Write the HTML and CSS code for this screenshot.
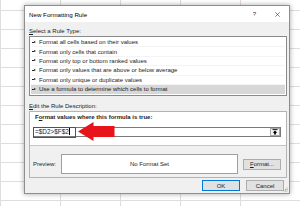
FILE: index.html
```html
<!DOCTYPE html>
<html lang="en">
<head>
    <meta charset="UTF-8">
    <title>New Formatting Rule</title>
    <link rel="stylesheet" href="styles.css">
</head>
<body>
    <div class="dialog">
        <div class="titlebar">
            <span class="title">New Formatting Rule</span>
            <span class="help">?</span>
            <svg class="close" width="5" height="5" viewBox="0 0 5 5">
                <path d="M0.3 0.3 L4.7 4.7 M4.7 0.3 L0.3 4.7" stroke="#333" stroke-width="0.6" fill="none"/>
            </svg>
        </div>

        <div class="content">
            <div class="label"><u>S</u>elect a Rule Type:</div>
            <ul class="rules">
                <li><i class="bullet"></i>Format all cells based on their values</li>
                <li><i class="bullet"></i>Format only cells that contain</li>
                <li><i class="bullet"></i>Format only top or bottom ranked values</li>
                <li><i class="bullet"></i>Format only values that are above or below average</li>
                <li><i class="bullet"></i>Format only unique or duplicate values</li>
                <li class="selected"><i class="bullet"></i>Use a formula to determine which cells to format</li>
            </ul>

            <div class="label label-edit"><u>E</u>dit the Rule Description:</div>
            <div class="group">
                <div class="formula-area">
                    <div class="bold">F<u>o</u>rmat values where this formula is true:</div>
                    <div class="input">
                        <span class="formula">=$D2&gt;$F$2</span><span class="caret"></span>
                        <span class="collapse">
                            <svg width="6" height="6" viewBox="0 0 6 6">
                                <path d="M0.5 0.6 H5.5" stroke="#000" stroke-width="0.9"/>
                                <path d="M3 1.4 L5.3 3.8 H3.9 V5.6 H2.1 V3.8 H0.7 Z" fill="#000"/>
                            </svg>
                        </span>
                    </div>
                    <div class="highlight"></div>
                    <svg class="arrow" width="37" height="19" viewBox="0 0 37 19">
                        <polygon points="0,9.5 15.5,0 15.5,4 36.5,4 36.5,15 15.5,15 15.5,19" fill="#e8141c"/>
                    </svg>
                </div>
                <div class="preview-area">
                    <span class="preview-label">Preview:</span>
                    <div class="preview-box">No Format Set</div>
                    <button class="btn btn-format"><u>F</u>ormat...</button>
                </div>
            </div>

            <div class="buttons">
                <button class="btn btn-default">OK</button>
                <button class="btn">Cancel</button>
            </div>
        </div>

        <svg class="grip" width="5" height="5" viewBox="0 0 5 5">
            <rect x="3.5" y="0.5" width="1" height="1" fill="#a0a0a0"/>
            <rect x="2" y="2" width="1" height="1" fill="#a0a0a0"/>
            <rect x="3.5" y="2" width="1" height="1" fill="#a0a0a0"/>
            <rect x="0.5" y="3.5" width="1" height="1" fill="#a0a0a0"/>
            <rect x="2" y="3.5" width="1" height="1" fill="#a0a0a0"/>
            <rect x="3.5" y="3.5" width="1" height="1" fill="#a0a0a0"/>
        </svg>
    </div>
</body>
</html>
```

FILE: styles.css
```css
* {
    box-sizing: border-box;
}

body {
    margin: 0;
    width: 300px;
    height: 206px;
    overflow: hidden;
    position: relative;
    background-color: #fff;
    background-image:
        linear-gradient(to right, #dedede 1px, transparent 1px),
        linear-gradient(to bottom, #dedede 1px, transparent 1px);
    background-size: 60px 19px;
    background-position: 0 10px;
    font-family: "Liberation Sans", Arial, sans-serif;
    font-size: 6px;
    color: #1b1b1b;
}

.dialog {
    position: absolute;
    left: 24px;
    top: 5px;
    width: 266px;
    height: 189px;
    border: 1px solid #8f8f8f;
    background: #f0f0f0;
    box-shadow: 0 0 5px rgba(0, 0, 0, .35);
    display: flex;
    flex-direction: column;
}

.titlebar {
    height: 16px;
    background: #fff;
    display: flex;
    align-items: center;
    padding: 0 8.8px 0 4px;
}

.title {
    flex: 1;
    font-size: 6.2px;
    color: #000;
}

.help {
    font-size: 6px;
    color: #333;
    margin-right: 19px;
}

.content {
    flex: 1;
    padding: 0 2px 0 4px;
}

.label {
    line-height: 8px;
    margin-top: 5px;
}

.label-edit {
    margin-top: 5.3px;
}

.rules {
    margin: 1px 0 0;
    padding: 1px;
    list-style: none;
    background: #fff;
    border: 1px solid #8a8a8a;
}

.rules li {
    height: 9.4px;
    display: flex;
    align-items: center;
    padding-left: 1px;
    border-bottom: 1px solid #f4f4f4;
    white-space: nowrap;
}

.rules li.selected {
    background: #d7d7d7;
    border-bottom-color: #d7d7d7;
}

.bullet {
    width: 4px;
    height: 3px;
    margin-right: 3px;
    position: relative;
    display: inline-block;
}

.bullet::before {
    content: "";
    position: absolute;
    left: 0;
    top: 1px;
    width: 2px;
    height: 1px;
    background: #222;
}

.bullet::after {
    content: "";
    position: absolute;
    left: 2px;
    top: 0;
    border-left: 2px solid #222;
    border-top: 1.5px solid transparent;
    border-bottom: 1.5px solid transparent;
}

.group {
    margin-top: 1px;
    border: 1px solid #b4b4b4;
}

.formula-area {
    position: relative;
    height: 34.3px;
    padding: 1px 5px 0 3px;
    background: #fff;
    border-bottom: 1px solid #c4c4c4;
}

.bold {
    line-height: 8px;
    margin-left: 2px;
    font-weight: bold;
}

.input {
    margin-top: 6px;
    width: 248px;
    height: 10px;
    border: 1px solid #7a7a7a;
    display: flex;
    align-items: center;
    padding-left: 1px;
    background: #fff;
}

.formula {
    font-size: 6.4px;
}

.caret {
    width: 0.6px;
    height: 7px;
    margin-left: 0.6px;
    background: #000;
}

.collapse {
    margin-left: auto;
    width: 10px;
    height: 8px;
    border: 1px solid #a8a8a8;
    background: #f4f4f4;
    display: flex;
    align-items: center;
    justify-content: center;
}

.highlight {
    position: absolute;
    left: 3.3px;
    top: 15.6px;
    width: 42.4px;
    height: 10.4px;
    border: 1.4px solid #e0141e;
}

.arrow {
    position: absolute;
    left: 47.5px;
    top: 10.8px;
}

.preview-area {
    height: 31px;
    display: flex;
    align-items: center;
    align-self: flex-start;
    padding: 8px 0 2.7px 3px;
}

.preview-label {
    width: 28px;
}

.preview-box {
    width: 177px;
    height: 20.3px;
    border: 1px solid #a0a0a0;
    background: #fff;
    display: flex;
    align-items: center;
    justify-content: center;
}

.btn {
    font-family: "Liberation Sans", Arial, sans-serif;
    font-size: 6px;
    color: #1b1b1b;
    width: 38px;
    height: 10.5px;
    padding: 0;
    border: 1px solid #adadad;
    background: #e1e1e1;
}

.btn-format {
    margin-left: 5px;
    height: 11px;
}

.btn-default {
    border-color: #0078d7;
}

.buttons {
    display: flex;
    justify-content: flex-end;
    gap: 6px;
    margin-top: 2.5px;
    padding-right: 3px;
}

.grip {
    position: absolute;
    right: 1px;
    bottom: 1px;
}
```
